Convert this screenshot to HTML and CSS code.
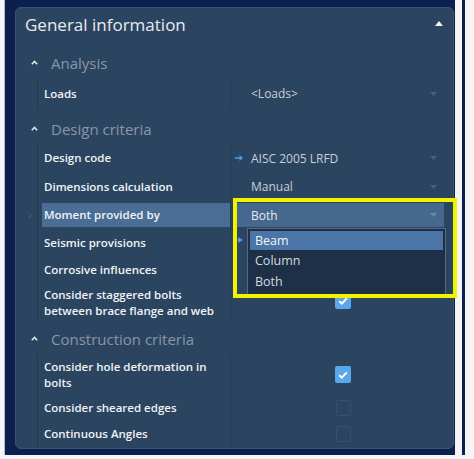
FILE: index.html
```html
<!DOCTYPE html>
<html lang="en">
<head>
    <meta charset="UTF-8">
    <title>General information</title>
    <link rel="stylesheet" href="styles.css">
</head>
<body>
    <div class="screen">
        <div class="frame">
            <div class="panel">
                <!-- Panel title -->
                <div class="panel-title">
                    <span>General information</span>
                    <svg class="collapse" width="8" height="5" viewBox="0 0 8 5"><path d="M0 5 L4 0 L8 5 Z" fill="#f2f2f2"/></svg>
                </div>

                <!-- Analysis -->
                <div class="section-head">
                    <svg class="caret" width="7" height="5" viewBox="0 0 7 5"><path d="M0.8 4.2 L3.5 1.4 L6.2 4.2" fill="none" stroke="#e4e4e4" stroke-width="1.6"/></svg>
                    <span>Analysis</span>
                </div>
                <div class="rows rows--analysis">
                    <div class="row row--loads">
                        <div class="gutter"></div>
                        <div class="label"><div class="label-text">Loads</div></div>
                        <div class="value">
                            <div class="field">
                                <span class="mark"></span>
                                <span class="text">&lt;Loads&gt;</span>
                                <svg class="drop" width="7" height="4" viewBox="0 0 7 4"><path d="M0 0 L3.5 4 L7 0 Z" fill="#44607f"/></svg>
                            </div>
                        </div>
                    </div>
                </div>

                <!-- Design criteria -->
                <div class="section-head">
                    <svg class="caret" width="7" height="5" viewBox="0 0 7 5"><path d="M0.8 4.2 L3.5 1.4 L6.2 4.2" fill="none" stroke="#e4e4e4" stroke-width="1.6"/></svg>
                    <span>Design criteria</span>
                </div>
                <div class="rows">
                    <div class="row">
                        <div class="gutter"></div>
                        <div class="label"><div class="label-text">Design code</div></div>
                        <div class="value">
                            <div class="field">
                                <span class="mark"><svg width="8" height="6" viewBox="0 0 8 6"><path d="M0 2.2 H4.5 V0 L8 3 L4.5 6 V3.8 H0 Z" fill="#4e9be6"/></svg></span>
                                <span class="text">AISC 2005 LRFD</span>
                                <svg class="drop" width="7" height="4" viewBox="0 0 7 4"><path d="M0 0 L3.5 4 L7 0 Z" fill="#44607f"/></svg>
                            </div>
                        </div>
                    </div>
                    <div class="row row--tall">
                        <div class="gutter"></div>
                        <div class="label"><div class="label-text">Dimensions calculation</div></div>
                        <div class="value">
                            <div class="field">
                                <span class="mark"></span>
                                <span class="text">Manual</span>
                                <svg class="drop" width="7" height="4" viewBox="0 0 7 4"><path d="M0 0 L3.5 4 L7 0 Z" fill="#44607f"/></svg>
                            </div>
                        </div>
                    </div>
                    <div class="row row--selected">
                        <div class="gutter">
                            <svg width="4" height="7" viewBox="0 0 4 7"><path d="M0.5 0.5 L3.3 3.5 L0.5 6.5" fill="none" stroke="#4a6584" stroke-width="1"/></svg>
                        </div>
                        <div class="label"><div class="label-text">Moment provided by</div></div>
                        <div class="value">
                            <div class="field">
                                <span class="mark"></span>
                                <span class="text">Both</span>
                                <svg class="drop" width="7" height="4" viewBox="0 0 7 4"><path d="M0 0 L3.5 4 L7 0 Z" fill="#6a88aa"/></svg>
                            </div>
                        </div>
                    </div>
                    <div class="row">
                        <div class="gutter"></div>
                        <div class="label"><div class="label-text">Seismic provisions</div></div>
                        <div class="value"></div>
                    </div>
                    <div class="row row--corrosive">
                        <div class="gutter"></div>
                        <div class="label"><div class="label-text">Corrosive influences</div></div>
                        <div class="value"></div>
                    </div>
                    <div class="row row--double">
                        <div class="gutter"></div>
                        <div class="label"><div class="label-text">Consider staggered bolts between brace flange and web</div></div>
                        <div class="value">
                            <div class="field field--check field--top">
                                <span class="check check--on"><svg width="10" height="8" viewBox="0 0 10 8"><path d="M1.2 4.2 L3.8 6.6 L8.8 1.4" fill="none" stroke="#fff" stroke-width="2"/></svg></span>
                            </div>
                        </div>
                    </div>
                </div>

                <!-- Construction criteria -->
                <div class="section-head">
                    <svg class="caret" width="7" height="5" viewBox="0 0 7 5"><path d="M0.8 4.2 L3.5 1.4 L6.2 4.2" fill="none" stroke="#e4e4e4" stroke-width="1.6"/></svg>
                    <span>Construction criteria</span>
                </div>
                <div class="rows">
                    <div class="row row--double">
                        <div class="gutter"></div>
                        <div class="label"><div class="label-text">Consider hole deformation in bolts</div></div>
                        <div class="value">
                            <div class="field field--check">
                                <span class="check check--on"><svg width="10" height="8" viewBox="0 0 10 8"><path d="M1.2 4.2 L3.8 6.6 L8.8 1.4" fill="none" stroke="#fff" stroke-width="2"/></svg></span>
                            </div>
                        </div>
                    </div>
                    <div class="row row--short">
                        <div class="gutter"></div>
                        <div class="label"><div class="label-text">Consider sheared edges</div></div>
                        <div class="value">
                            <div class="field field--check"><span class="check"></span></div>
                        </div>
                    </div>
                    <div class="row row--short">
                        <div class="gutter"></div>
                        <div class="label"><div class="label-text">Continuous Angles</div></div>
                        <div class="value">
                            <div class="field field--check"><span class="check"></span></div>
                        </div>
                    </div>
                </div>
            </div>
        </div>
        <div class="scrollbar"></div>
    </div>

    <!-- Open dropdown of "Moment provided by" -->
    <div class="dropdown">
        <svg class="dropdown-mark" width="5" height="6" viewBox="0 0 5 6"><path d="M0 0 L5 3 L0 6 Z" fill="#4e9be6"/></svg>
        <ul class="dropdown-list">
            <li class="active">Beam</li>
            <li>Column</li>
            <li>Both</li>
        </ul>
    </div>

    <!-- Annotation -->
    <div class="highlight-box"></div>
</body>
</html>
```

FILE: styles.css
```css
/* General */
body {
    margin: 0;
    background: #f6f6f6;
    font-family: 'Open Sans', 'Noto Sans', sans-serif;
    color: #eef0f2;
}

.screen {
    display: flex;
    height: 459px;
    padding-left: 4px;
}

/* Dark window frame */
.frame {
    width: 439px;
    height: 442px;
    padding: 7px 1px 6px 10px;
    background: #0d1f4c;
    border-left: 1px solid #a7c0e2;
}

.scrollbar {
    width: 7px;
    height: 455px;
    border-right: 3px solid #0d1f4c;
    background: #f4f4f4;
}

/* Panel */
.panel {
    height: 440px;
    background: #2b4560;
    border: 1px solid #35557c;
    border-radius: 6px;
    overflow: hidden;
}

.panel-title {
    display: flex;
    align-items: center;
    justify-content: space-between;
    height: 33px;
    padding: 0 10px 6px 9px;
    font-size: 17px;
    color: #e9ebee;
}

.collapse {
    margin-top: -3px;
}

/* Section headers */
.section-head {
    display: flex;
    align-items: center;
    height: 31px;
    padding-left: 15px;
    font-size: 15px;
    color: #8996a7;
}

.caret {
    margin-right: 13px;
}

/* Property rows */
.rows--analysis {
    padding-bottom: 4px;
}

.row {
    display: grid;
    grid-template-columns: 21px 194px 1fr;
    height: 28px;
}

.row--loads {
    height: 31px;
}

.row--tall {
    height: 29px;
}

.row--corrosive {
    height: 25px;
}

.row--short {
    height: 26px;
}

.row--double {
    height: 41px;
}

.gutter {
    display: flex;
    align-items: center;
    justify-content: center;
    padding-left: 6px;
}

.label {
    border-left: 1px solid #213850;
    border-right: 1px solid #223a53;
    padding: 2px 0 2px 4px;
}

.label-text {
    display: flex;
    align-items: center;
    height: 100%;
    padding-left: 2px;
    font-size: 11.5px;
    font-weight: 600;
    line-height: 16px;
    color: #f1f3f5;
}

.row--selected .label-text {
    background: #4a6d95;
}

.value {
    padding: 2px 9px 2px 4px;
}

.field {
    display: flex;
    align-items: center;
    height: 100%;
    font-size: 12px;
    color: #c9cfd6;
}

.row--selected .field {
    background: #46688f;
    color: #e2e8ee;
}

.mark {
    display: flex;
    align-items: center;
    width: 16px;
}

.drop {
    margin-left: auto;
    margin-right: 7px;
}

/* Checkboxes */
.field--check {
    justify-content: center;
    padding-left: 7px;
}

.field--top {
    align-items: flex-start;
    padding-top: 8px;
    height: auto;
}

.check {
    display: flex;
    align-items: center;
    justify-content: center;
    width: 13px;
    height: 14px;
    border: 1px solid #36516e;
    border-radius: 2px;
}

.check--on {
    width: 16px;
    height: 17px;
    border: none;
    background: #5ba7ec;
}

/* Open dropdown */
.dropdown {
    position: absolute;
    left: 238px;
    top: 228px;
    display: flex;
    align-items: flex-start;
}

.dropdown-mark {
    margin-top: 9px;
    margin-right: 4px;
}

.dropdown-list {
    width: 193px;
    margin: 0;
    padding: 2px;
    list-style: none;
    background: #1e3048;
    border: 1px solid #586a80;
}

.dropdown-list li {
    height: 21px;
    padding-left: 5px;
    font-size: 12.5px;
    line-height: 21px;
    color: #d3d8de;
}

.dropdown-list li.active {
    height: 19px;
    line-height: 19px;
    background: #4a75a6;
    color: #f2f5f8;
}

/* Yellow annotation */
.highlight-box {
    position: absolute;
    left: 233px;
    top: 198px;
    width: 216px;
    height: 92px;
    border: 4px solid #f4f200;
}
```
